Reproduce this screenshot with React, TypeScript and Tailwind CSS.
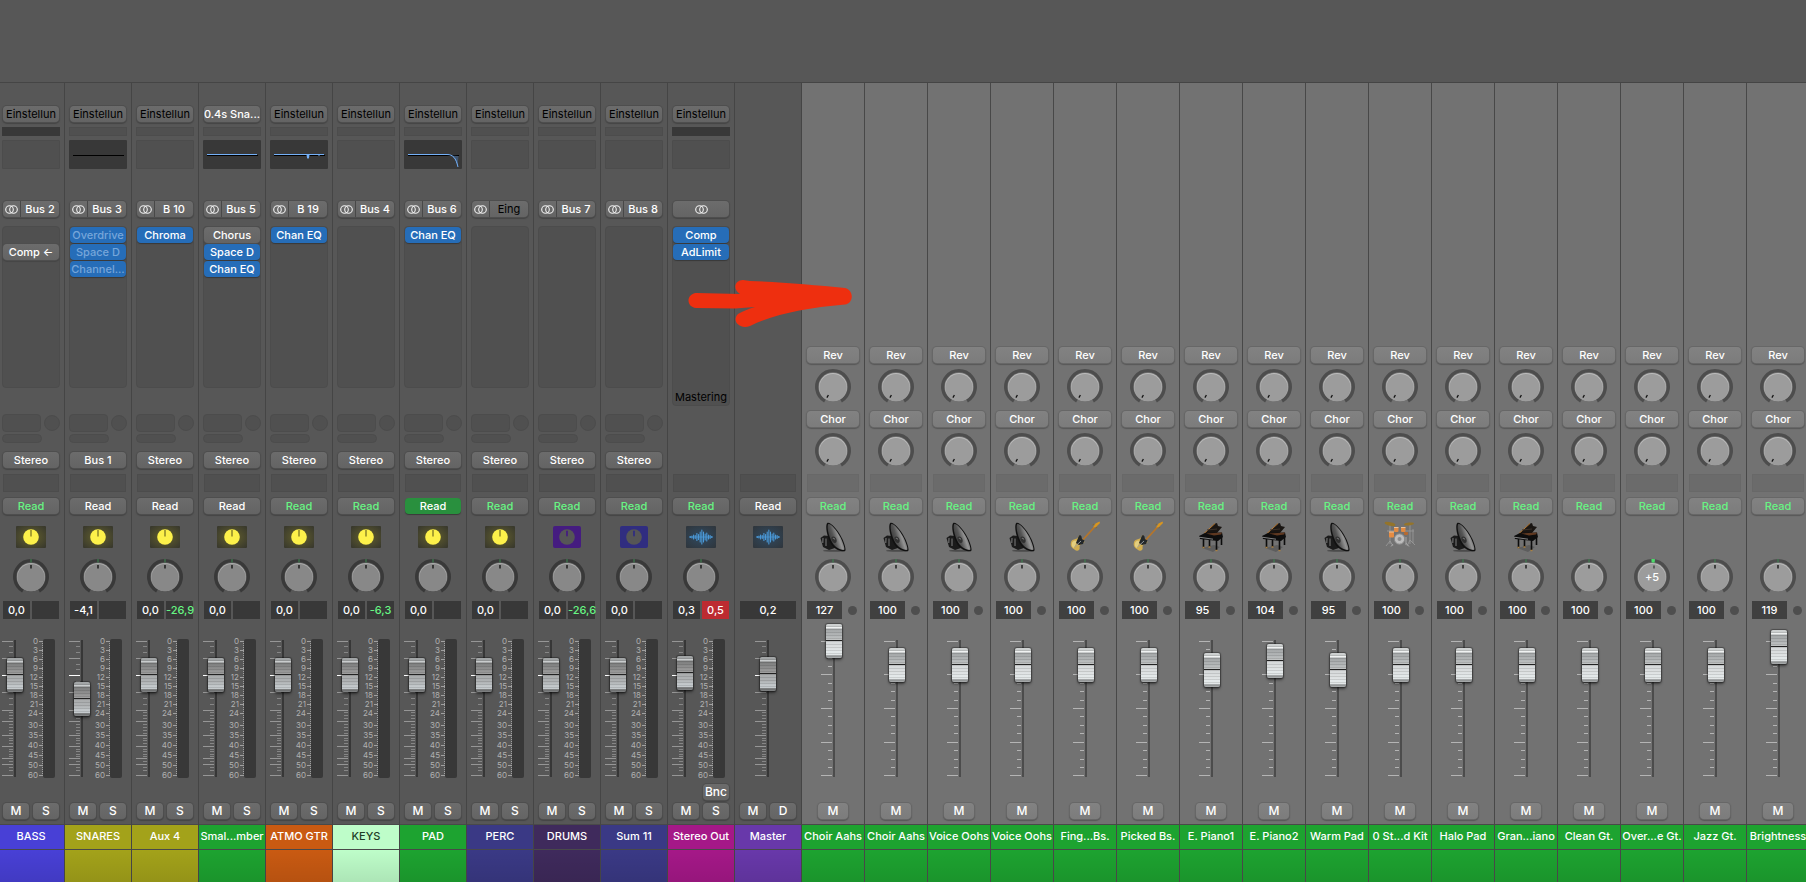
import type { CSSProperties, ReactNode } from "react"
import clsx from "clsx"

type EqShape = "empty" | "flat" | "line" | "notch" | "lowpass"
type Insert = { label: string; state?: "on" | "off" | "plain" | "blank" }
type StripIcon = "aux" | "purple" | "indigo" | "wave"

type AudioChannel = {
  name: string
  color: string
  preset?: string
  presetSet?: boolean
  reduction?: boolean
  eq?: EqShape
  input?: string
  inputDim?: boolean
  inserts?: Insert[]
  output?: string
  read?: "green" | "white" | "active"
  icon: StripIcon
  volume: string
  peak?: string
  level: number
  kind?: "channel" | "stereo" | "master"
}

const AUDIO: AudioChannel[] = [
  { name: "BASS", color: "bg-[#4840d6]", reduction: true, input: "Bus 2", inserts: [{ label: "", state: "blank" }, { label: "Comp ←", state: "plain" }], icon: "aux", volume: "0,0", level: 100 },
  { name: "SNARES", color: "bg-[#a3a21a]", eq: "flat", input: "Bus 3", inserts: [{ label: "Overdrive", state: "off" }, { label: "Space D", state: "off" }, { label: "Channel...", state: "off" }], output: "Bus 1", read: "white", icon: "aux", volume: "-4,1", level: 76 },
  { name: "Aux 4", color: "bg-[#a3a21a]", input: "B 10", inserts: [{ label: "Chroma" }], read: "white", icon: "aux", volume: "0,0", peak: "-26,9", level: 100 },
  { name: "Smal...mber", color: "bg-[#1da330]", preset: "0.4s Sna...", presetSet: true, eq: "line", input: "Bus 5", inserts: [{ label: "Chorus", state: "plain" }, { label: "Space D" }, { label: "Chan EQ" }], read: "white", icon: "aux", volume: "0,0", level: 100 },
  { name: "ATMO GTR", color: "bg-[#c95a12]", eq: "notch", input: "B 19", inserts: [{ label: "Chan EQ" }], icon: "aux", volume: "0,0", level: 100 },
  { name: "KEYS", color: "bg-[#befdc9]", input: "Bus 4", icon: "aux", volume: "0,0", peak: "-6,3", level: 100 },
  { name: "PAD", color: "bg-[#1da330]", eq: "lowpass", input: "Bus 6", inserts: [{ label: "Chan EQ" }], read: "active", icon: "aux", volume: "0,0", level: 100 },
  { name: "PERC", color: "bg-[#3a3985]", input: "Eing", inputDim: true, icon: "aux", volume: "0,0", level: 100 },
  { name: "DRUMS", color: "bg-[#3f2a5c]", input: "Bus 7", icon: "purple", volume: "0,0", peak: "-26,6", level: 100 },
  { name: "Sum 11", color: "bg-[#3a3985]", input: "Bus 8", icon: "indigo", volume: "0,0", level: 100 },
  { name: "Stereo Out", color: "bg-[#a51888]", reduction: true, inserts: [{ label: "Comp" }, { label: "AdLimit" }], icon: "wave", volume: "0,3", peak: "0,5", level: 102, kind: "stereo" },
  { name: "Master", color: "bg-[#6838aa]", read: "white", icon: "wave", volume: "0,2", level: 101, kind: "master" },
]

type Instrument = "speaker" | "guitar" | "piano" | "drums"
type MidiChannel = { name: string; volume: number; level: number; icon?: Instrument; pan?: number }

const MIDI: MidiChannel[] = [
  { name: "Choir Aahs", volume: 127, level: 134, icon: "speaker" },
  { name: "Choir Aahs", volume: 100, level: 110, icon: "speaker" },
  { name: "Voice Oohs", volume: 100, level: 110, icon: "speaker" },
  { name: "Voice Oohs", volume: 100, level: 110, icon: "speaker" },
  { name: "Fing...Bs.", volume: 100, level: 110, icon: "guitar" },
  { name: "Picked Bs.", volume: 100, level: 110, icon: "guitar" },
  { name: "E. Piano1", volume: 95, level: 105, icon: "piano" },
  { name: "E. Piano2", volume: 104, level: 114, icon: "piano" },
  { name: "Warm Pad", volume: 95, level: 105, icon: "speaker" },
  { name: "0 St...d Kit", volume: 100, level: 110, icon: "drums" },
  { name: "Halo Pad", volume: 100, level: 110, icon: "speaker" },
  { name: "Gran...iano", volume: 100, level: 110, icon: "piano" },
  { name: "Clean Gt.", volume: 100, level: 110 },
  { name: "Over...e Gt.", volume: 100, level: 110, pan: 5 },
  { name: "Jazz Gt.", volume: 100, level: 110 },
  { name: "Brightness", volume: 119, level: 128 },
]

const DARK_BTN = "bg-linear-to-b from-[#6c6c6c] to-[#646464] shadow-[0_0_0_1px_#4e4e4e,0_1px_1px_1px_#454545]"
const LIGHT_BTN = "bg-linear-to-b from-[#828282] to-[#7c7c7c] shadow-[0_0_0_1px_#676767,0_1px_1px_1px_#585858]"

function Button({ children, className }: { children: ReactNode; className?: string }) {
  return (
    <button className={clsx("flex h-4 items-center justify-center overflow-hidden rounded-[4px] leading-4 whitespace-nowrap", className)}>
      {children}
    </button>
  )
}

function StereoRings() {
  return (
    <svg viewBox="0 0 13 9" className="h-[9px] w-[13px]" fill="none" stroke="#f2f2f2" strokeWidth="1.1">
      <circle cx="4.5" cy="4.5" r="3.8" />
      <circle cx="8.5" cy="4.5" r="3.8" />
    </svg>
  )
}

function EqThumb({ shape = "empty" }: { shape?: EqShape }) {
  if (shape === "empty") return <div className="h-[29px] rounded-[1px] border border-[#4c4c4c] bg-[#505050]" />
  return (
    <svg viewBox="0 0 58 29" className="h-[29px] w-full rounded-[1px] bg-[#383838]" fill="none">
      <path d="M4 15.5H55" stroke="#000" />
      {shape === "line" && <path d="M4 14.5H54" stroke="#74b0f8" />}
      {shape === "notch" && (
        <>
          <path d="M4 14.5H54" stroke="#74b0f8" />
          <path d="M36.5 15H39.5L38.8 18.5H37.2ZM48 15h2l-1 1z" fill="#74b0f8" />
        </>
      )}
      {shape === "lowpass" && (
        <>
          <path d="M46 15.5C50 17 52.5 21 53.5 27L54.5 16Z" fill="#41566f" />
          <path d="M4 14.5H43C49 14.5 52 18 54 27" stroke="#74b0f8" />
        </>
      )}
    </svg>
  )
}

function Knob({ light, min, pan }: { light?: boolean; min?: boolean; pan?: number }) {
  return (
    <div className="relative mx-auto size-9">
      <svg viewBox="0 0 36 36" className="size-9" fill="none">
        <path d="M9.9 32.1A16.3 16.3 0 1 1 26.1 32.1" stroke={light ? "#4d4d4d" : "#393939"} strokeWidth="3.3" />
        <circle cx="18" cy="18" r="14.3" fill={light ? "#7c7c7c" : "#606060"} />
        <circle cx="18" cy="18" r="14" fill={light ? "#bdbdbd" : "#adadad"} />
        <circle cx="18" cy="18.6" r="13.7" fill={light ? "#9c9c9c" : "#888"} />
        {min ? (
          <path d="M13.4 26L11.9 28.6" stroke="#111" strokeWidth="1.3" />
        ) : pan ? (
          <>
            <path d="M17.5 1.8Q19 1.7 20.8 2" stroke="#4ddb6b" strokeWidth="3.6" />
            <path d="M20 6.5V9.5" stroke="#333" strokeWidth="1.2" />
          </>
        ) : (
          <>
            <path d="M18 0V3.5" stroke="#3f8a52" />
            <path d="M18 6V9.5" stroke="#000" strokeWidth="1.2" />
          </>
        )}
      </svg>
      {pan && <span className="absolute inset-0 grid place-items-center text-white">+{pan}</span>}
    </div>
  )
}

const WAVE = [1, 2, 4, 3, 7, 5, 10, 14, 10, 6, 8, 4, 3, 1]

function Icon({ kind }: { kind: StripIcon }) {
  if (kind === "wave") {
    return (
      <svg viewBox="0 0 30 22" className="h-[22px] w-[30px] rounded-[1px] bg-radial from-[#2f4a61] to-[#2f353b]" stroke="#4b9bdb" strokeLinecap="round">
        <path d="M3.5 11H26.5" strokeWidth="0.7" />
        {WAVE.map((h, i) => (
          <path key={i} d={`M${4.3 + i * 1.65} ${11 - h / 2}V${11 + h / 2}`} strokeWidth="1.05" />
        ))}
      </svg>
    )
  }
  if (kind === "aux") {
    return (
      <svg viewBox="0 0 30 22" className="h-[22px] w-[30px] rounded-[1px] bg-radial from-[#66622a] to-[#36362c]">
        <circle cx="15" cy="11" r="7.8" fill="#fdf14a" />
        <path d="M15 4V10.5" stroke="#8d862a" strokeWidth="1.5" />
      </svg>
    )
  }
  const purple = kind === "purple"
  return (
    <svg viewBox="0 0 28 22" className={clsx("h-[22px] w-7 rounded-[2px]", purple ? "bg-[#451c80]" : "bg-[#302d80]")}>
      <circle cx="14" cy="11" r="7.8" fill="#565656" />
      <path d="M14 5.5V9.5" stroke={purple ? "#451c80" : "#302d80"} strokeWidth="1.8" strokeLinecap="round" />
    </svg>
  )
}

function Speaker() {
  return (
    <svg viewBox="0 0 26 30" className="h-[30px] w-[26px]">
      <ellipse cx="14" cy="28.8" rx="11" ry="1" fill="#4b4b4b" />
      <path d="M0.5 16L4 13.5L9 14L15 26L9 28L3 25Z" fill="#1b1b1b" />
      <path d="M3 16L2.8 21M6 16.5L6 24" stroke="#989898" strokeWidth="0.8" />
      <path d="M7.2 1C10 -0.8 17 7 20.5 13.5C24 19.5 26.5 27.5 25.2 29C23 30 16 28.5 12.5 24C8 18.5 4.5 5 7.2 1Z" fill="#111" />
      <path d="M8.2 2C10.5 1 16.5 8 19.7 14C22.8 19.5 25 26.5 24.3 27.8C22 28.5 17 26.5 13.8 22.8C9.5 17.5 6.3 5.5 8.2 2Z" fill="url(#cone)" />
      <path d="M11.5 15.5C13 13.5 16 15 16.6 18C17 20.5 15.5 21.5 14 20.8C12.3 20 11 17.5 11.5 15.5Z" fill="#303030" />
      <path d="M12.5 16.2C13.5 15.2 15 16.2 15.3 18Z" fill="#777" />
    </svg>
  )
}

function Guitar() {
  return (
    <svg viewBox="0 0 30 31" className="h-[31px] w-[30px]">
      <path d="M10 22L25 5.5" stroke="#b5752a" strokeWidth="1.8" />
      <path d="M23 6.5L25.5 2.5L29.5 0.5L30 2L26 6Z" fill="#d9961f" />
      <path d="M22.5 4L24 3M27 6L26 7.5" stroke="#8a6a2a" />
      <path d="M1 21C2 17.5 6 19 8 16.5C9 14 10.5 13.5 11 15.5C11 18 14 19 14.5 21C13 23 9.5 23 9.5 26C10.5 29 7 31 5 29C4 28 2.5 27.5 1.5 26C0.5 24.5 0.5 23 1 21Z" fill="#d0ad50" />
      <path d="M2 22C3 19 6 20 7 19.5C6 22 5 26 3.5 27C2 26 1.5 24 2 22Z" fill="#e4cf80" />
      <path d="M8 17C9 13.5 10.5 13 11.5 15.5L12 18L14.5 19.5L13 23L9 24L6 22Z" fill="#23272a" />
      <path d="M4.5 26L11 20" stroke="#9aa0a4" strokeWidth="0.9" />
    </svg>
  )
}

function Piano() {
  return (
    <svg viewBox="0 0 26 30" className="h-[30px] w-[26px]">
      <path d="M4 26L16 23L22 25L15 30Z" fill="#5d5d5d" />
      <path d="M5.5 12L16 2L19 1L20 4L24 5L19 11Z" fill="#191512" />
      <path d="M6 11.5L17 1.5" stroke="#b87a35" />
      <path d="M9 8L19 7" stroke="#3b3129" />
      <path d="M1 14L7 11L24 10.5L25 15L20 19L2 17Z" fill="#0d0d0d" />
      <path d="M8 11.5L24 10.5L23 12.5L16 13.5Z" fill="#5f3820" />
      <path d="M1 15.2L15 17.2" stroke="#8f8f8f" strokeWidth="0.9" />
      <path d="M5.5 17V26M11.5 18V25M18.5 18V28M23.5 15V23" stroke="#0c0c0c" strokeWidth="1.6" />
      <path d="M4.5 25.5H6.5M10.5 25H12.5M17.5 28.5H19.5" stroke="#a98040" strokeWidth="1.3" />
    </svg>
  )
}

function Drums() {
  return (
    <svg viewBox="0 0 32 27" className="mb-1 h-[27px] w-8">
      <path d="M6 4V23M26 4V23M2 25L6 20L9 25M23 25L26 19L31 24M3 10H12M20 10H30M29 8V22" stroke="#9c9c9c" strokeWidth="0.8" fill="none" />
      <ellipse cx="6" cy="3" rx="5.5" ry="1.7" fill="#94742a" transform="rotate(12 6 3)" />
      <ellipse cx="25" cy="3" rx="5" ry="1.4" fill="#94742a" transform="rotate(-8 25 3)" />
      <rect x="10" y="6" width="4.5" height="5" rx="1" fill="#e08a42" />
      <rect x="17" y="6" width="4.5" height="5" rx="1" fill="#e08a42" />
      <rect x="5" y="10.5" width="5" height="6" rx="1" fill="#e68c42" />
      <rect x="20" y="11" width="4" height="3" rx="1" fill="#b76a30" />
      <path d="M10 6.5H14.5M17 6.5H21.5M5 11H10" stroke="#edcfae" strokeWidth="0.8" />
      <circle cx="15.5" cy="18" r="5.2" fill="#bcbcbc" stroke="#888" />
      <circle cx="15.5" cy="18" r="2" fill="#8a8a8a" />
      <path d="M9 23L7 25.5M22 22L25 25.5M22 16V24" stroke="#a6a6a6" />
    </svg>
  )
}

const INSTRUMENTS = { speaker: Speaker, guitar: Guitar, piano: Piano, drums: Drums }

const AUDIO_MAJOR = [17, 34, 68, 86, 97, 111, 122, 134, 140, 151]
const AUDIO_MINOR = [22, 28, 40, 45, 57, 62, 74, 80, 88, 91, 94, 100, 103, 106, 109, 114, 116, 119, 125, 127, 130, 132, 137, 143, 146]
const MIDI_MAJOR = [17, 50, 84, 118, 151]
const MIDI_MINOR = [25, 34, 42, 59, 67, 76, 92, 101, 109, 126, 135, 143]

const RIDGES = "repeating-linear-gradient(to bottom, #0000 0 2px, #0000001c 2px 3px)"
const DARK_CAP = `${RIDGES}, linear-gradient(to bottom, #a2a5a6 0 3px, #c9cccd 3px 4px, #7c7d7d 5px, #929292 12px, #a1a1a1 16px, #222 16px 17px, #a9abac 17px, #b0b3b5 24px, #c3c8cb 28px, #c6cbce 31px, #7d7f80 31px 34px)`
const LIGHT_CAP = `${RIDGES}, linear-gradient(to bottom, #cdd0d0 0 3px, #f0f2f2 3px 4px, #a3a6a7 5px, #b4b7b8 12px, #c2c4c4 16px, #222 16px 17px, #d5d8d9 17px, #dde0e1 24px, #e4e9ea 28px, #e3e7e8 31px, #a5a8a9 31px 34px)`

function Fader({ name, level, light }: { name: string; level: number; light?: boolean }) {
  const major = light ? MIDI_MAJOR : AUDIO_MAJOR
  const minor = light ? MIDI_MINOR : AUDIO_MINOR
  return (
    <div className="relative h-[168px] w-[22px]">
      <svg viewBox="0 0 22 168" className="h-full w-full" fill="none" stroke={light ? "#b4b4b4" : "#969696"}>
        <path d={major.map((y) => `M0 ${y + 0.5}H11`).join("")} />
        <path d={minor.map((y) => `M7 ${y + 0.5}H11`).join("")} opacity={light ? 1 : 0.75} />
        {!light && <path d="M0 51.5H11" stroke="#fff" />}
        <path d="M13 16V153" stroke={light ? "#4c4c4c" : "#373737"} strokeWidth="2" />
      </svg>
      <input
        type="range"
        min={0}
        max={134}
        defaultValue={level}
        aria-label={`${name} volume`}
        className="absolute top-0 left-[5px] m-0 h-[168px] w-4 appearance-none bg-transparent [direction:rtl] [writing-mode:vertical-lr]
                   [&::-webkit-slider-thumb]:h-[34px] [&::-webkit-slider-thumb]:w-4 [&::-webkit-slider-thumb]:appearance-none
                   [&::-webkit-slider-thumb]:rounded-[2px] [&::-webkit-slider-thumb]:shadow-[0_0_1px_1px_#0005,0_2px_3px_#0007]
                   [&::-webkit-slider-thumb]:bg-[image:var(--cap)]"
        style={{ "--cap": light ? LIGHT_CAP : DARK_CAP } as CSSProperties}
      />
    </div>
  )
}

const SCALE_TOP = [0, 3, 6, 9, 12, 15, 18, 21, 24]
const SCALE_LOW = [30, 35, 40, 45, 50, 60]

function Meter() {
  return (
    <div className="flex pt-[13px]">
      <div className="flex w-[14px] flex-col gap-0.5 text-right text-[8px] font-normal text-[#b0b0b0]">
        <div>{SCALE_TOP.map((n) => <div key={n} className="h-[9px] leading-[9px]">{n}</div>)}</div>
        <div>{SCALE_LOW.map((n) => <div key={n} className="h-[10px] leading-[10px]">{n}</div>)}</div>
      </div>
      <svg viewBox="0 0 5 143" className="h-[143px] w-[5px]" stroke="#a0a0a0" fill="none">
        <path d="M1 4.5H5M1 13.5H5M1 22.5H5M1 31.5H5M1 40.5H5M1 49.5H5M1 58.5H5M1 67.5H5M1 76.5H5M1 88.5H5M1 98.5H5M1 108.5H5M1 118.5H5M1 128.5H5M1 138.5H5" />
        <path d="M4.5 4V139" strokeDasharray="1 1" />
      </svg>
      <div className="mt-0.5 h-[139px] w-3 rounded-[2px] bg-[#383838]" />
    </div>
  )
}

function NameRow({ name, color }: { name: string; color: string }) {
  return (
    <>
      <div className={clsx("mt-[5px] h-[26px] overflow-hidden border-y border-[#494949] text-center leading-[22px] whitespace-nowrap", color, name === "KEYS" ? "text-[#1f3d26]" : "text-white")}>
        <span className="-mx-2">{name}</span>
      </div>
      <div className={clsx("min-h-8 flex-1 bg-linear-to-b from-[#0000] to-[#00000018]", color)} />
    </>
  )
}

function insertClass(state: Insert["state"] = "on") {
  if (state === "blank") return "invisible"
  if (state === "plain") return clsx(DARK_BTN, "text-white")
  return clsx("bg-[#266db8] shadow-[0_1px_1px_#333c]", state === "off" ? "text-[#76a6da]" : "text-white")
}

function AudioStrip({ ch }: { ch: AudioChannel }) {
  const { kind = "channel", read = "green" } = ch
  return (
    <section className="relative flex w-[67px] shrink-0 flex-col border-r border-[#454545] bg-[#575757]">
      <div className="h-[391px] px-1">
        {kind !== "master" && (
          <>
            <div className="px-px pt-[23px]">
              <Button className={clsx("w-full", DARK_BTN, ch.presetSet ? "text-white" : "font-normal text-black")}>
                {ch.preset ?? "Einstellun"}
              </Button>
            </div>
            <div className={clsx("mt-[5px] mb-1 h-[9px]", ch.reduction ? "bg-[#383838]" : "border border-[#4c4c4c] bg-[#505050]")} />
            <EqThumb shape={ch.eq} />
            <div className={clsx("mx-px mt-8 flex h-4 rounded-[4px]", DARK_BTN)}>
              {ch.input ? (
                <>
                  <button aria-label="Input format" className="grid w-[18px] place-items-center border-r border-[#484848]"><StereoRings /></button>
                  <button className={clsx("flex-1 leading-4", ch.inputDim ? "font-normal text-black" : "text-white")}>{ch.input}</button>
                </>
              ) : (
                <button aria-label="Output format" className="grid flex-1 place-items-center"><StereoRings /></button>
              )}
            </div>
            <div className={clsx("mt-[9px] flex flex-col gap-px rounded-[4px] border border-[#4c4c4c] bg-[#505050]", kind === "stereo" ? "h-[180px]" : "h-[162px]")}>
              {ch.inserts?.map((ins, i) => (
                <Button key={i} className={clsx("w-full", insertClass(ins.state))}>{ins.label}</Button>
              ))}
              {kind === "stereo" && <span className="mt-auto text-center leading-4 font-normal text-black">Mastering</span>}
            </div>
          </>
        )}
        {kind === "channel" && (
          <>
            <div className="mt-[26px] flex items-center gap-[3px]">
              <div className="h-[18px] w-10 rounded-[4px] border border-[#4c4c4c] bg-[#505050]" />
              <div className="size-4 shrink-0 rounded-full border border-[#4c4c4c] bg-[#505050]" />
            </div>
            <div className="mt-0.5 h-[9px] w-10 rounded-full border border-[#4c4c4c] bg-[#505050]" />
            <Button className={clsx("mx-px mt-[9px] w-14 text-white", DARK_BTN)}>{ch.output ?? "Stereo"}</Button>
          </>
        )}
      </div>

      <div className="px-[5px]">
        <div className="h-[18px] border border-[#4c4c4c] bg-[#505050]" />
        <Button
          className={clsx(
            "mt-1.5 w-full",
            read === "active" ? "bg-[#29903e] text-white shadow-[0_1px_1px_#333c]" : DARK_BTN,
            read === "green" && "text-[#67f583]",
            read === "white" && "text-white",
          )}
        >
          Read
        </Button>
        <div className="my-1.5 grid h-[33px] place-items-center"><Icon kind={ch.icon} /></div>
        <div className="h-9">{kind !== "master" && <Knob />}</div>
        <div className="mt-1.5 flex h-[18px] gap-0.5 text-center leading-[18px]">
          <div className="flex-1 bg-[#383838] text-white">{ch.volume}</div>
          {kind !== "master" && (
            <div className={clsx("w-[27px]", kind === "stereo" ? "bg-[#bd2b31] text-white" : "bg-[#383838] text-[#67f583]")}>{ch.peak}</div>
          )}
        </div>
      </div>

      <div className={clsx("mt-[5px] flex", kind === "master" ? "pl-5" : "pl-1")}>
        <Fader name={ch.name} level={ch.level} />
        {kind !== "master" && <Meter />}
      </div>
      {kind === "stereo" && (
        <Button className={clsx("absolute top-[701px] right-[5px] w-[26px] text-xs text-white", DARK_BTN)}>Bnc</Button>
      )}
      <div className="mt-[11px] flex justify-between px-[5px] text-xs text-white">
        <Button className={clsx("w-[26px]", DARK_BTN)}>M</Button>
        <Button className={clsx("w-[26px]", DARK_BTN)}>{kind === "master" ? "D" : "S"}</Button>
      </div>
      <NameRow name={ch.name} color={ch.color} />
    </section>
  )
}

function MidiStrip({ ch }: { ch: MidiChannel }) {
  const Picture = ch.icon && INSTRUMENTS[ch.icon]
  return (
    <section className="flex w-[63px] shrink-0 flex-col border-r border-[#484848] bg-[#727272]">
      <div className="px-[5px] pt-[264px]">
        <div className="h-[127px]">
          {["Rev", "Chor"].map((send) => (
            <div key={send} className="h-16">
              <Button className={clsx("mb-1.5 w-full text-white", LIGHT_BTN)}>{send}</Button>
              <Knob light min />
            </div>
          ))}
        </div>
        <div className="h-[18px] border border-[#686868] bg-[#6b6b6b]" />
        <Button className={clsx("mt-1.5 w-full text-[#67f583]", LIGHT_BTN)}>Read</Button>
        <div className="my-1.5 grid h-[33px] place-items-center">{Picture && <Picture />}</div>
        <Knob light pan={ch.pan} />
        <div className="mt-1.5 flex h-[18px] items-center gap-1.5">
          <div className="h-full w-[35px] bg-[#404040] text-center leading-[18px] text-white">{ch.volume}</div>
          <div className="size-[9px] rounded-full bg-[#4e4e4e]" />
        </div>
      </div>
      <div className="mt-[5px] pl-[19px]">
        <Fader name={ch.name} level={ch.level} light />
      </div>
      <div className="mt-[11px] flex justify-center text-xs text-white">
        <Button className={clsx("w-[30px]", LIGHT_BTN)}>M</Button>
      </div>
      <NameRow name={ch.name} color="bg-[#1da330]" />
    </section>
  )
}

export default function App() {
  return (
    <main className="flex min-h-screen flex-col overflow-hidden bg-[#575757] font-[Inter,sans-serif] text-[11px] font-medium">
      <svg className="absolute size-0" aria-hidden="true">
        <defs>
          <linearGradient id="cone" x1="0" y1="0.8" x2="1" y2="0.3">
            <stop offset="0" stopColor="#2c2c2c" />
            <stop offset="0.4" stopColor="#565656" />
            <stop offset="0.65" stopColor="#949494" />
            <stop offset="1" stopColor="#4a4a4a" />
          </linearGradient>
        </defs>
      </svg>
      <header className="h-[82px] shrink-0" />
      <div className="relative -ml-0.5 flex flex-1 border-t border-[#454545]">
        {AUDIO.map((ch) => <AudioStrip key={ch.name} ch={ch} />)}
        {MIDI.map((ch, i) => <MidiStrip key={i} ch={ch} />)}

        {/* marker pointing at the MIDI channels */}
        <svg viewBox="0 0 190 75" className="absolute top-[182px] left-[682px] h-[75px] w-[190px]" fill="#ee2f0f">
          <path d="M16 28L60 29C52 24 55 15 63 15L70 16C100 17 135 20 165 23C174 25 174 38 165 39.5C125 43 95 49 70 61C60 65 51 56 58 49C63 46 68 44 75 42L55 43.5L16 43C6 42 6 29 16 28Z" />
        </svg>
      </div>
    </main>
  )
}
